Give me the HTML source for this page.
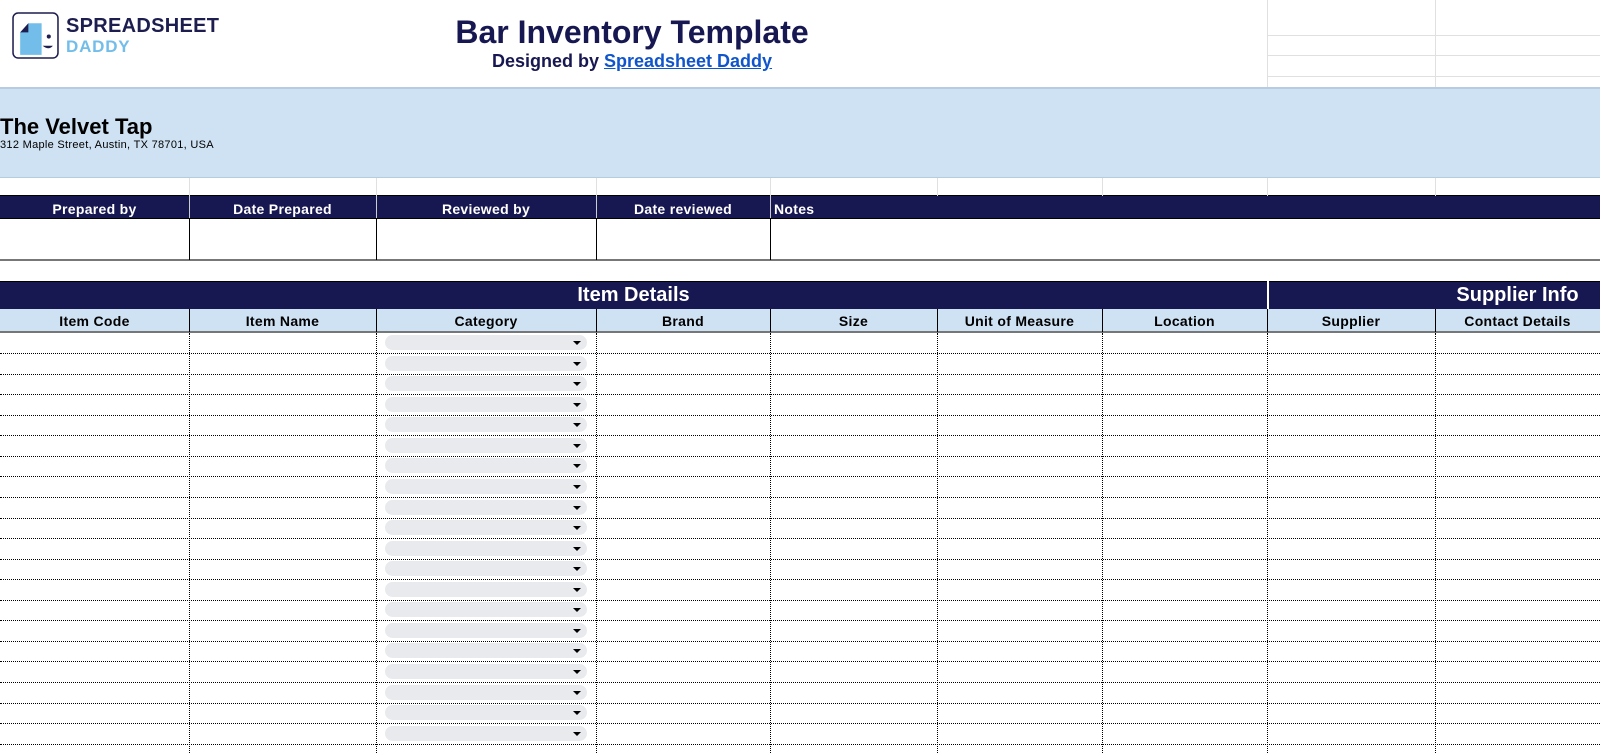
<!DOCTYPE html>
<html><head><meta charset="utf-8"><style>
*{margin:0;padding:0;box-sizing:border-box}
body{width:1600px;height:730px;overflow:hidden;background:#fff;font-family:"Liberation Sans",sans-serif;position:relative}
.a{position:absolute}
.nv{background:#171751}
.t{position:absolute;color:#fff;font-weight:bold;font-size:14px;letter-spacing:0.3px;text-align:center}
.h{position:absolute;color:#000;font-weight:bold;font-size:14px;letter-spacing:0.3px;text-align:center}
</style></head><body>
<svg class="a" style="left:12px;top:12px" width="47" height="47" viewBox="0 0 46 46">
<rect x="1" y="1" width="44" height="44" rx="5" fill="#fff" stroke="#1d1d4f" stroke-width="1.5"/>
<path d="M8 20 L16 11 L29 11 L29 42 L8 42 Z" fill="#72bde9"/>
<path d="M16 11 L16 20 L8 20 Z" fill="#1d1d4f"/>
<circle cx="36" cy="24" r="2" fill="#1d1d4f"/>
<path d="M30 33 Q36 38 40 33 Z" fill="#1d1d4f"/>
</svg>
<div class="a" style="left:66px;top:15px;font-size:20px;font-weight:bold;color:#1d1d4f;letter-spacing:0.3px">SPREADSHEET</div>
<div class="a" style="left:66px;top:37px;font-size:17px;font-weight:bold;color:#72bde9;letter-spacing:0.8px">DADDY</div>
<div class="a" style="left:332px;width:600px;top:14px;text-align:center;font-size:32px;font-weight:bold;color:#171751">Bar Inventory Template</div>
<div class="a" style="left:332px;width:600px;top:51px;text-align:center;font-size:18px;font-weight:bold;color:#171751">Designed by <span style="color:#1155cc;text-decoration:underline">Spreadsheet Daddy</span></div>
<div class="a" style="left:1267px;top:0;width:1px;height:87px;background:#e0e0e0"></div>
<div class="a" style="left:1435px;top:0;width:1px;height:87px;background:#e0e0e0"></div>
<div class="a" style="left:1267px;top:35px;width:333px;height:1px;background:#e0e0e0"></div>
<div class="a" style="left:1267px;top:55px;width:333px;height:1px;background:#e0e0e0"></div>
<div class="a" style="left:1267px;top:76px;width:333px;height:1px;background:#e0e0e0"></div>
<div class="a" style="left:0;top:87px;width:1600px;height:91px;background:#cfe2f3;border-top:2px solid #b8cce0;border-bottom:1px solid #b8cce0"></div>
<div class="a" style="left:0;top:114px;font-size:22px;font-weight:bold;color:#000">The Velvet Tap</div>
<div class="a" style="left:0;top:139px;font-size:11px;letter-spacing:0.3px;color:#000">312 Maple Street, Austin, TX 78701, USA</div>
<div id="g"></div>
<div class="a nv" style="left:0;top:195px;width:1600px;height:24px;border-top:1px solid #000;border-bottom:1px solid #000"></div>
<div class="t" style="left:0;width:189px;top:201px">Prepared by</div>
<div class="t" style="left:189px;width:187px;top:201px">Date Prepared</div>
<div class="t" style="left:376px;width:220px;top:201px">Reviewed by</div>
<div class="t" style="left:596px;width:174px;top:201px">Date reviewed</div>
<div class="t" style="left:774px;top:201px;text-align:left">Notes</div>
<div class="a" style="left:0;top:259px;width:1600px;height:2px;background:#777"></div>
<div class="a nv" style="left:0;top:281px;width:1600px;height:28px;border-top:1px solid #000"></div>
<div class="a" style="left:1267px;top:281px;width:2px;height:28px;background:#fff"></div>
<div class="a" style="left:0;width:1267px;top:284px;text-align:center;color:#fff;font-weight:bold;font-size:20px">Item Details</div>
<div class="a" style="left:1435px;width:165px;top:284px;text-align:center;color:#fff;font-weight:bold;font-size:20px">Supplier Info</div>
<div class="a" style="left:0;top:309px;width:1600px;height:23px;background:#cfe2f3"></div>
<div class="a" style="left:0;top:331px;width:1600px;height:2px;background:#777"></div>
<div id="d"></div>
<script>
var cols=[0,189,376,596,770,937,1102,1267,1435,1600];
var g='';
for(var i=1;i<cols.length-1;i++){g+='<div class="a" style="left:'+cols[i]+'px;top:178px;width:1px;height:18px;background:#e0e0e0"></div>';}
[189,376,596,770].forEach(function(x){g+='<div class="a" style="left:'+x+'px;top:196px;width:1px;height:22px;background:#ccc"></div><div class="a" style="left:'+x+'px;top:219px;width:1px;height:41px;background:#000"></div>';});
var names=['Item Code','Item Name','Category','Brand','Size','Unit of Measure','Location','Supplier','Contact Details'];
for(var i=0;i<9;i++){g+='<div class="h" style="left:'+cols[i]+'px;width:'+(cols[i+1]-cols[i])+'px;top:313px">'+names[i]+'</div>';
 if(i>0)g+='<div class="a" style="left:'+cols[i]+'px;top:309px;width:1px;height:23px;background:#000"></div>';}
for(var i=1;i<cols.length-1;i++){g+='<div class="a" style="left:'+cols[i]+'px;top:333px;width:0;height:420px;border-left:1px dotted #000"></div>';}
for(var r=0;r<20;r++){var y=333+r*20.56;
 g+='<div class="a" style="left:0;top:'+(y+20).toFixed(1)+'px;width:1600px;height:0;border-top:1px dotted #000"></div>';
 g+='<div class="a" style="left:385px;top:'+(y+2).toFixed(1)+'px;width:202px;height:15px;border-radius:8px;background:#e8eaed"></div>';
 g+='<div class="a" style="left:573px;top:'+(y+8).toFixed(1)+'px;width:0;height:0;border-left:4px solid transparent;border-right:4px solid transparent;border-top:4px solid #000"></div>';}
document.getElementById('d').innerHTML=g;
</script>
</body></html>
